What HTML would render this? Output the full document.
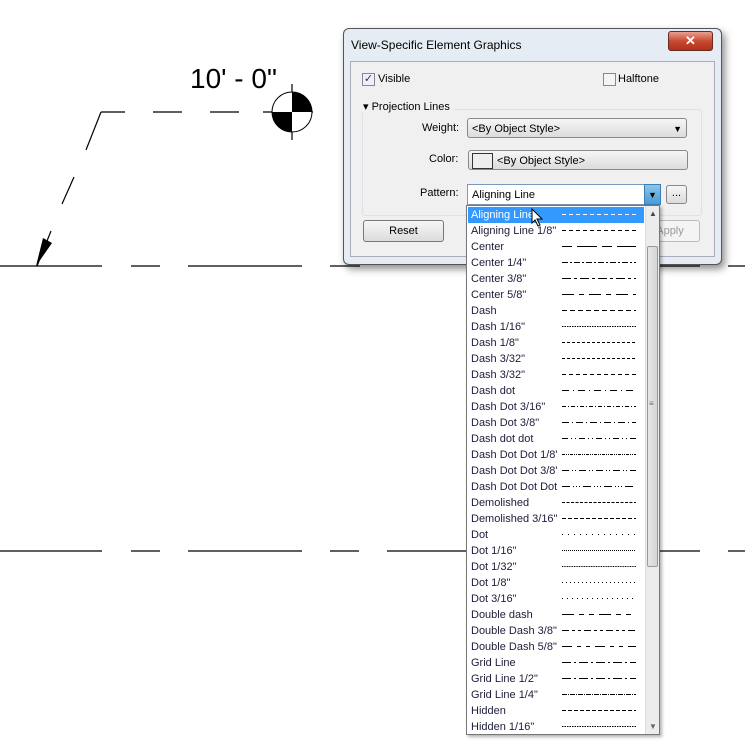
<!DOCTYPE html>
<html><head><meta charset="utf-8"><style>
body{margin:0;width:745px;height:741px;background:#fff;position:relative;overflow:hidden;font-family:"Liberation Sans",sans-serif;}
.a{position:absolute}
.t{font-size:11px;color:#000}
.it{position:absolute;left:1px;width:177px;height:16px;font-size:11px;line-height:16px;color:#1c1c3a;padding-left:3px;box-sizing:border-box}
</style></head><body>
<svg class="a" style="left:0;top:0" width="745" height="741">
<g stroke="#000" stroke-width="1.2" fill="none">
<line x1="0" y1="266" x2="102" y2="266"/><line x1="131" y1="266" x2="160" y2="266"/><line x1="188" y1="266" x2="302" y2="266"/><line x1="330" y1="266" x2="360" y2="266"/>
<line x1="660" y1="266" x2="700" y2="266"/><line x1="728" y1="266" x2="745" y2="266"/>
<line x1="0" y1="551" x2="102" y2="551"/><line x1="131" y1="551" x2="160" y2="551"/><line x1="188" y1="551" x2="302" y2="551"/><line x1="330" y1="551" x2="359" y2="551"/><line x1="387" y1="551" x2="466" y2="551"/>
<line x1="660" y1="551" x2="700" y2="551"/><line x1="728" y1="551" x2="745" y2="551"/>
<line x1="101" y1="112" x2="125" y2="112"/><line x1="153" y1="112" x2="182" y2="112"/><line x1="210" y1="112" x2="239" y2="112"/>
<line x1="101" y1="112" x2="86" y2="150"/><line x1="74" y1="177" x2="62" y2="204"/><line x1="51" y1="231" x2="37" y2="266"/>
<line x1="263" y1="112" x2="313" y2="112"/><line x1="292" y1="84" x2="292" y2="140"/>
</g>
<polygon points="36,266 43,238 52,243" fill="#000"/>
<circle cx="292" cy="112" r="20" fill="#fff" stroke="#000"/>
<path d="M292,112 L292,92 A20,20 0 0 1 312,112 Z M292,112 L292,132 A20,20 0 0 1 272,112 Z" fill="#000"/>
</svg>
<div class="a" style="left:190px;top:62px;font-size:28px;line-height:34px">10' - 0"</div>

<!-- dialog -->
<div class="a" style="left:343px;top:28px;width:377px;height:235px;background:#e6ecf3;border:1px solid #555;border-radius:6px;box-shadow:3px 4px 8px rgba(0,0,0,.45)"></div>
<div class="a t" style="left:351px;top:38px;font-size:12px">View-Specific Element Graphics</div>
<div class="a" style="left:668px;top:31px;width:43px;height:18px;border-radius:3px;background:linear-gradient(#e8a090,#c84a33 50%,#b03018);border:1px solid #6a2a20;color:#fff;font-size:13px;font-weight:bold;text-align:center;line-height:17px">✕</div>
<div class="a" style="left:350px;top:61px;width:363px;height:194px;background:#f0f0f0;border:1px solid #aab"></div>
<div class="a" style="left:362px;top:73px;width:11px;height:11px;border:1px solid #888;background:#eef;font-size:11px;line-height:11px;color:#334;text-align:center">✓</div>
<div class="a t" style="left:378px;top:73px">Visible</div>
<div class="a" style="left:603px;top:73px;width:11px;height:11px;border:1px solid #888;background:#f4f4f4"></div>
<div class="a t" style="left:618px;top:73px">Halftone</div>
<div class="a" style="left:362px;top:109px;width:356px;height:105px;border:1px solid #dde2ea;border-radius:3px;left:362px;width:338px"></div>
<div class="a t" style="left:362px;top:100px;background:#f0f0f0;padding:0 4px 0 1px">▾ Projection Lines</div>
<div class="a t" style="left:422px;top:122px">Weight:</div>
<div class="a t" style="left:467px;top:118px;width:220px;height:20px;border:1px solid #888;border-radius:3px;background:linear-gradient(#f6f6f6,#dcdcdc);line-height:20px;padding-left:4px;box-sizing:border-box">&lt;By Object Style&gt;<span style="position:absolute;right:4px;font-size:9px">▼</span></div>
<div class="a t" style="left:429px;top:153px">Color:</div>
<div class="a t" style="left:468px;top:150px;width:220px;height:20px;border:1px solid #888;border-radius:3px;background:linear-gradient(#f6f6f6,#dcdcdc);line-height:20px;box-sizing:border-box"><span style="position:absolute;left:3px;top:2px;width:19px;height:14px;border:1px solid #333;background:#eee"></span><span style="position:absolute;left:28px">&lt;By Object Style&gt;</span></div>
<div class="a t" style="left:420px;top:187px">Pattern:</div>
<div class="a t" style="left:467px;top:184px;width:194px;height:21px;border:1px solid #7a9ab8;background:#fff;line-height:21px;padding-left:4px;box-sizing:border-box">Aligning Line</div>
<div class="a" style="left:644px;top:184px;width:17px;height:21px;background:linear-gradient(#8cc4ec,#4a9ad4);border:1px solid #3c7fb1;box-sizing:border-box;font-size:9px;text-align:center;line-height:21px">▼</div>
<div class="a t" style="left:666px;top:185px;width:21px;height:19px;border:1px solid #888;border-radius:3px;background:linear-gradient(#f6f6f6,#dcdcdc);text-align:center;line-height:15px;box-sizing:border-box">...</div>
<div class="a t" style="left:363px;top:220px;width:81px;height:22px;border:1px solid #777;border-radius:3px;background:linear-gradient(#f6f6f6,#dcdcdc);text-align:center;line-height:21px;box-sizing:border-box">Reset</div>
<div class="a t" style="left:640px;top:220px;width:60px;height:22px;border:1px solid #bbb;border-radius:3px;background:#f4f4f4;color:#999;text-align:center;line-height:21px;box-sizing:border-box">Apply</div>

<!-- list -->
<div class="a" style="left:466px;top:205px;width:194px;height:530px;background:#fff;border:1px solid #777;box-sizing:border-box;box-shadow:2px 2px 3px rgba(0,0,0,.3);overflow:hidden" id="L">
<div class="a" style="left:1px;top:1px;width:176px;height:16px;background:#3399ff"></div>
<div class="a" style="left:178px;top:0;width:15px;height:530px;background:#ececec;border-left:1px solid #ddd"></div>
<div class="a" style="left:180px;top:40px;width:11px;height:321px;background:linear-gradient(90deg,#e6e6e6,#d4d4d4);border:1px solid #999;border-radius:2px;box-sizing:border-box"></div>
<div class="a" style="left:182px;top:3px;font-size:8px;color:#444">▲</div>
<div class="a" style="left:182px;top:516px;font-size:8px;color:#666">▼</div>
<div class="a" style="left:182px;top:196px;font-size:8px;color:#666;line-height:4px">≡</div>
</div>
<svg class="a" style="left:466px;top:205px" width="180" height="530" id="S"></svg>
<svg class="a" style="left:531px;top:208px" width="14" height="20"><path d="M1,1 L1,15 L4,12 L7,18 L9,17 L6,11 L11,11 Z" fill="#fff" stroke="#000" stroke-width="1"/></svg>
<script>
var items=[["Aligning Line","4 3"],["Aligning Line 1/8\"","4 3"],["Center","10 5 20 5"],["Center 1/4\"","6 2 2 2"],["Center 3/8\"","9 3 3 3"],["Center 5/8\"","12 5 5 5"],["Dash","5 3"],["Dash 1/16\"","1.5 1"],["Dash 1/8\"","3 2"],["Dash 3/32\"","3 2"],["Dash 3/32\"","4 3"],["Dash dot","7 4 1 4"],["Dash Dot 3/16\"","4 2 1 2"],["Dash Dot 3/8\"","7 3 1 3"],["Dash dot dot","6 3 1 3 1 3"],["Dash Dot Dot 1/8'","3 1 1 1 1 1"],["Dash Dot Dot 3/8'","7 3 1 2 1 3"],["Dash Dot Dot Dot","8 3 1 2 1 2 1 3"],["Demolished","3 1.5"],["Demolished 3/16\"","4 2"],["Dot","1 5"],["Dot 1/16\"","1 1"],["Dot 1/32\"","1 0.7"],["Dot 1/8\"","1 3"],["Dot 3/16\"","1 4"],["Double dash","12 5 5 5 5 5"],["Double Dash 3/8\"","7 3 3 3 3 3"],["Double Dash 5/8\"","10 5 4 5 4 5"],["Grid Line","9 3 2 3"],["Grid Line 1/2\"","9 3 2 3"],["Grid Line 1/4\"","5 1 1 1"],["Hidden","4 2"],["Hidden 1/16\"","1.5 1"]];
var L=document.getElementById('L'),S=document.getElementById('S'),svg='';
items.forEach(function(it,i){var d=document.createElement('div');d.className='it';d.style.top=(1+i*16)+'px';d.textContent=it[0];if(i==0)d.style.color='#fff';L.appendChild(d);
svg+='<line x1="96" x2="170" y1="'+(9.5+i*16)+'" y2="'+(9.5+i*16)+'" stroke="'+(i==0?'#fff':'#000')+'" stroke-width="1" stroke-dasharray="'+it[1]+'"/>';});
S.innerHTML=svg;
</script>
</body></html>
